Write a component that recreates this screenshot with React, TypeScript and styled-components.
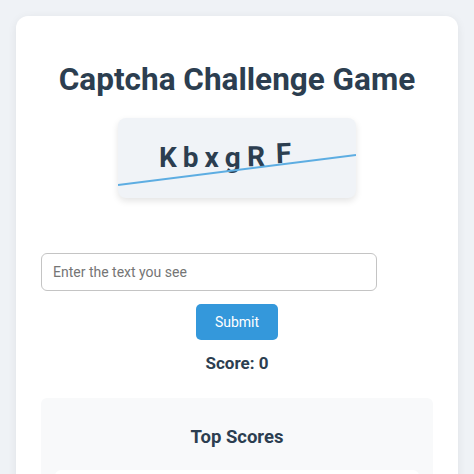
import styled, { createGlobalStyle } from "styled-components";

const GlobalStyle = createGlobalStyle`
  body {
    margin: 0;
    background: #eff2f6;
    font-family: Roboto, "Liberation Sans", sans-serif;
    color: #2c3e50;
  }
`;

const captcha = [
  { ch: "K", dy: 0, rot: 0, gap: 6 },
  { ch: "b", dy: 0, rot: 0, gap: 6 },
  { ch: "x", dy: 0, rot: 0, gap: 6 },
  { ch: "g", dy: 0, rot: 0, gap: 6 },
  { ch: "R", dy: -1, rot: -1, gap: 11 },
  { ch: "F", dy: -4, rot: -2, gap: 0 },
];

const App = () => {
  return (
    <>
      <GlobalStyle />
      <Page>
        <Card>
          <Title>Captcha Challenge Game</Title>
          <CaptchaBox>
            <CaptchaText>
              {captcha.map((c) => (
                <Glyph key={c.ch} $dy={c.dy} $rot={c.rot} $gap={c.gap}>
                  {c.ch}
                </Glyph>
              ))}
            </CaptchaText>
            <NoiseLine viewBox="0 0 238 80" preserveAspectRatio="none">
              <line x1="0" y1="67" x2="238" y2="37" stroke="#5dade2" strokeWidth="2" />
            </NoiseLine>
          </CaptchaBox>
          <AnswerInput placeholder="Enter the text you see" />
          <SubmitButton>Submit</SubmitButton>
          <Score>Score: 0</Score>
          <Leaderboard>
            <LeaderTitle>Top Scores</LeaderTitle>
            <ScoreList />
          </Leaderboard>
        </Card>
      </Page>
    </>
  );
};

export default App;

const Page = styled.div`
  padding: 16px 16px 0;
  height: 474px;
  box-sizing: border-box;
  overflow: hidden;
`;

const Card = styled.div`
  background: #ffffff;
  border-radius: 12px;
  box-shadow: 0 2px 10px rgba(0, 0, 0, 0.07);
  padding: 45px 25px 25px;
  display: flex;
  flex-direction: column;
  align-items: center;
`;

const Title = styled.h1`
  margin: 0 0 20px;
  font-size: 31.5px;
  font-weight: 700;
  color: #2c3e50;
`;

const CaptchaBox = styled.div`
  position: relative;
  width: 238px;
  height: 80px;
  box-sizing: border-box;
  padding-left: 41px;
  background: #f0f3f7;
  border-radius: 8px;
  box-shadow: 0 3px 7px rgba(0, 0, 0, 0.11);
  display: flex;
  align-items: center;
`;

const CaptchaText = styled.div`
  display: flex;
  font-family: Roboto, sans-serif;
  font-size: 28px;
  font-weight: 700;
  color: #2c3e50;
  line-height: 1;
`;

const Glyph = styled.span<{ $dy: number; $rot: number; $gap: number }>`
  display: inline-block;
  margin-right: ${(p) => p.$gap}px;
  transform: translateY(${(p) => p.$dy}px) rotate(${(p) => p.$rot}deg);
`;

const NoiseLine = styled.svg`
  position: absolute;
  inset: 0;
  width: 100%;
  height: 100%;
`;

const AnswerInput = styled.input`
  align-self: flex-start;
  margin-top: 55px;
  width: 336px;
  height: 38px;
  box-sizing: border-box;
  padding: 0 11px;
  border: 1.5px solid #c4c4c4;
  border-radius: 6px;
  font-family: Roboto, sans-serif;
  font-size: 14px;
  color: #2c3e50;

  &::placeholder {
    color: #757575;
  }
`;

const SubmitButton = styled.button`
  margin-top: 13px;
  width: 82px;
  height: 36px;
  border: none;
  border-radius: 5px;
  background: #3498db;
  color: #ffffff;
  font-family: Roboto, sans-serif;
  font-size: 14px;
`;

const Score = styled.div`
  margin-top: 13px;
  font-size: 17px;
  font-weight: 700;
  color: #2c3e50;
`;

const Leaderboard = styled.div`
  align-self: stretch;
  margin-top: 25px;
  background: #f8f9fa;
  border-radius: 6px;
  padding: 28px 14px 14px;
  display: flex;
  flex-direction: column;
  align-items: center;
`;

const LeaderTitle = styled.h2`
  margin: 0 0 22px;
  font-size: 18.5px;
  font-weight: 700;
  color: #2c3e50;
`;

const ScoreList = styled.div`
  align-self: stretch;
  height: 60px;
  background: #ffffff;
  border-radius: 6px;
`;
